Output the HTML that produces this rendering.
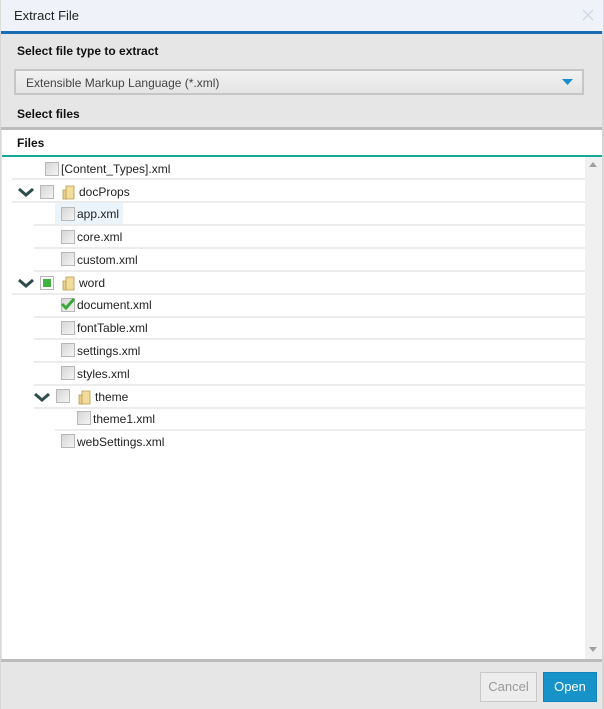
<!DOCTYPE html>
<html><head><style>
*{margin:0;padding:0;box-sizing:border-box}
body{width:604px;height:709px;background:#e6e6e6;font-family:"Liberation Sans",sans-serif;font-size:12px;color:#222;position:relative;overflow:hidden}
.abs{position:absolute}
.title{left:0;top:0;width:604px;height:31px;background:#eff2f8;border-left:1px solid #ddd;border-right:1px solid #ddd}
.title span{position:absolute;left:13px;top:8px;font-size:13px;color:#222}
.blue{left:1px;top:31px;width:601px;height:3px;background:#1a6db4}
.lbl{font-weight:bold;font-size:12px;color:#111}
.dd{left:14px;top:69px;width:570px;height:26px;border:2px solid #c6c6c6;background:linear-gradient(#f2f2f2,#e4e4e4)}
.dd span{position:absolute;left:10px;top:5px;color:#444}
.gbar{left:1px;width:601px;height:3px;background:#bcbcbc}
.white{left:2px;top:130px;width:600px;height:529px;background:#fff}
.teal{left:2px;top:155px;width:600px;height:2px;background:#16a896}
.sb{left:585px;top:157px;width:17px;height:502px;background:#f0f0f0}
.row{position:absolute;height:23px;right:19px;border-bottom:2px solid #ececec}
.cb{position:absolute;width:14px;height:14px;border:1px solid #b8b8b8;background:linear-gradient(135deg,#d6d6d6,#f4f4f4)}
.t{position:absolute;color:#222;font-size:12px}
.chev{position:absolute;width:18px;height:12px}
.fold{position:absolute;width:13px;height:16px}
.btn{position:absolute;top:672px;height:30px;font-size:13px;text-align:center;line-height:28px}
</style></head><body>
<div class="abs title"><span>Extract File</span>
<svg class="abs" style="left:581px;top:9px" width="12" height="12"><path d="M1 1L11 11M11 1L1 11" stroke="#cfd6e4" stroke-width="1.3"/></svg></div>
<div class="abs blue"></div>
<div class="abs lbl" style="left:17px;top:44px">Select file type to extract</div>
<div class="abs dd"><span>Extensible Markup Language (*.xml)</span>
<svg class="abs" style="left:546px;top:8px" width="11" height="6"><path d="M0 0H11L5.5 6Z" fill="#1a8fcc"/></svg></div>
<div class="abs lbl" style="left:17px;top:107px">Select files</div>
<div class="abs gbar" style="top:127px"></div>
<div class="abs white"></div>
<div class="abs lbl" style="left:17px;top:136px">Files</div>
<div class="abs teal"></div>
<div class="abs sb">
<svg class="abs" style="left:4px;top:5px" width="8" height="5"><path d="M0 5H8L4 0Z" fill="#a0a0a0"/></svg>
<svg class="abs" style="left:4px;top:490px" width="8" height="5"><path d="M0 0H8L4 5Z" fill="#a0a0a0"/></svg>
</div>
<div class="abs gbar" style="top:659px"></div>

<svg width="0" height="0" style="position:absolute"><defs>
<symbol id="ch" viewBox="0 0 18 12"><path d="M2 3L9 9L16 3" fill="none" stroke="#2f4b4b" stroke-width="3"/></symbol>
<symbol id="fd" viewBox="0 0 13 16"><path d="M1 6H5V15H1Z" fill="#e8cf8c" stroke="#b89a50" stroke-width="0.8"/><path d="M4 2H12V15H4Z" fill="#f2dc9c" stroke="#b89a50" stroke-width="0.8"/></symbol>
</defs></svg>

<!-- rows -->
<div class="row" style="left:12px;top:157px"></div>
<div class="cb" style="left:45px;top:162px"></div><div class="t" style="left:61px;top:162px">[Content_Types].xml</div>

<div class="row" style="left:12px;top:180px"></div>
<svg class="chev" style="left:17px;top:186px"><use href="#ch"/></svg>
<div class="cb" style="left:40px;top:185px"></div>
<svg class="fold" style="left:62px;top:184px"><use href="#fd"/></svg>
<div class="t" style="left:79px;top:185px">docProps</div>

<div class="row" style="left:34px;top:203px"></div>
<div class="abs" style="left:55px;top:203px;width:68px;height:21px;background:#eaf4fa"></div>
<div class="cb" style="left:61px;top:207px"></div><div class="t" style="left:77px;top:207px">app.xml</div>

<div class="row" style="left:34px;top:226px"></div>
<div class="cb" style="left:61px;top:230px"></div><div class="t" style="left:77px;top:230px">core.xml</div>

<div class="row" style="left:34px;top:249px"></div>
<div class="cb" style="left:61px;top:252px"></div><div class="t" style="left:77px;top:253px">custom.xml</div>

<div class="row" style="left:12px;top:272px"></div>
<svg class="chev" style="left:17px;top:277px"><use href="#ch"/></svg>
<div class="cb" style="left:40px;top:276px;background:#fff"><div style="position:absolute;left:2px;top:2px;width:8px;height:8px;background:#3fb33f"></div></div>
<svg class="fold" style="left:62px;top:275px"><use href="#fd"/></svg>
<div class="t" style="left:79px;top:276px">word</div>

<div class="row" style="left:34px;top:295px"></div>
<div class="cb" style="left:61px;top:298px"></div>
<svg class="abs" style="left:60px;top:297px" width="16" height="14"><path d="M2 7L6 11L14 2" fill="none" stroke="#3aa83a" stroke-width="3"/></svg>
<div class="t" style="left:77px;top:298px">document.xml</div>

<div class="row" style="left:34px;top:317px"></div>
<div class="cb" style="left:61px;top:321px"></div><div class="t" style="left:77px;top:321px">fontTable.xml</div>

<div class="row" style="left:34px;top:340px"></div>
<div class="cb" style="left:61px;top:343px"></div><div class="t" style="left:77px;top:344px">settings.xml</div>

<div class="row" style="left:34px;top:363px"></div>
<div class="cb" style="left:61px;top:366px"></div><div class="t" style="left:77px;top:367px">styles.xml</div>

<div class="row" style="left:34px;top:386px"></div>
<svg class="chev" style="left:33px;top:391px"><use href="#ch"/></svg>
<div class="cb" style="left:56px;top:389px"></div>
<svg class="fold" style="left:78px;top:389px"><use href="#fd"/></svg>
<div class="t" style="left:95px;top:390px">theme</div>

<div class="row" style="left:55px;top:408px"></div>
<div class="cb" style="left:77px;top:411px"></div><div class="t" style="left:93px;top:412px">theme1.xml</div>

<div class="cb" style="left:61px;top:434px"></div><div class="t" style="left:77px;top:435px">webSettings.xml</div>

<div class="btn" style="left:480px;width:57px;border:1px solid #c8c8c8;background:#ededed;color:#999">Cancel</div>
<div class="btn" style="left:543px;width:54px;border:1px solid #1383bd;background:#1893c9;color:#fff">Open</div>
<div class="abs" style="left:0;top:31px;width:1px;height:678px;background:#d6d6d6"></div>
<div class="abs" style="left:602px;top:31px;width:2px;height:678px;background:#d6d6d6"></div>
</body></html>
